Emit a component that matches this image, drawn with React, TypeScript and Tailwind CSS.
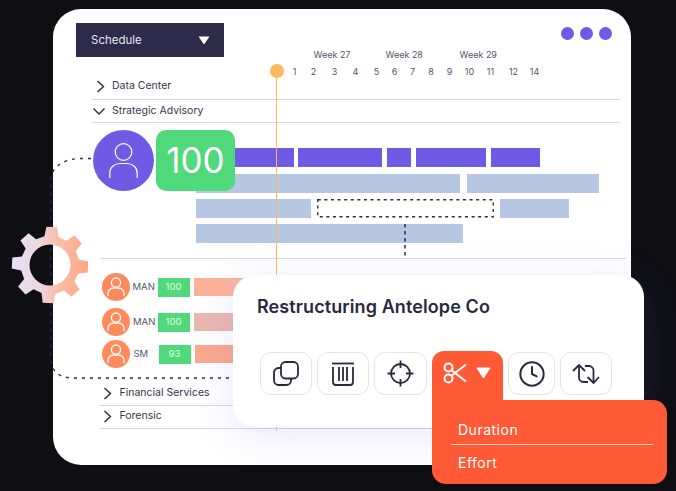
import type { ReactNode } from "react";
import { Clock } from "lucide-react";

const F = "font-['Inter','Liberation_Sans',sans-serif]";

const days: [string, string][] = [
  ["1", "w-[20px]"], ["2", "w-[18px]"], ["3", "w-[24px]"], ["4", "w-[18px]"], ["5", "w-[24px]"],
  ["6", "w-[12px]"], ["7", "w-[24px]"], ["8", "w-[13px]"], ["9", "w-[24px]"], ["10", "w-[16px]"],
  ["11", "w-[26px]"], ["12", "w-[20px]"], ["14", "w-[22px]"],
];

function gearPath() {
  const cx = 50, cy = 265, teeth = 8, rot = 0.05;
  const R = 38, r = 28.5;
  const pts: string[] = [];
  for (let i = 0; i < teeth; i++) {
    const a = (i * 2 * Math.PI) / teeth + rot;
    const p = (rad: number, off: number) => {
      const x = cx + rad * Math.sin(a) + off * Math.cos(a);
      const y = cy - rad * Math.cos(a) + off * Math.sin(a);
      return `${x.toFixed(2)} ${y.toFixed(2)}`;
    };
    pts.push(p(r, -7), p(R, -5.5), p(R, 5.5), p(r, 7));
  }
  const hole = 20.5;
  return `M${pts.join(" L")} Z M${cx - hole} ${cy} a${hole} ${hole} 0 1 0 ${hole * 2} 0 a${hole} ${hole} 0 1 0 ${-hole * 2} 0 Z`;
}

function Chevron({ down = false }: { down?: boolean }) {
  return down ? (
    <svg width="14" height="9" viewBox="0 0 14 9" fill="none" stroke="#2a2840" strokeWidth="1.4">
      <path d="M1.5 1.5 L7 7 L12.5 1.5" />
    </svg>
  ) : (
    <svg width="9" height="13" viewBox="0 0 9 13" fill="none" stroke="#2a2840" strokeWidth="1.4">
      <path d="M1.5 1 L7.5 6.5 L1.5 12" />
    </svg>
  );
}

function Person() {
  return (
    <svg width="29" height="35" viewBox="0 0 29 35" fill="none" stroke="#fff" strokeWidth="1.2">
      <circle cx="14.5" cy="9" r="8.3" />
      <path d="M0.8 35 V30 C0.8 24 6 20.5 11 20.5 H18 C23 20.5 28.2 24 28.2 30 V35" />
    </svg>
  );
}

function SmallPerson() {
  return (
    <svg width="18" height="20" viewBox="0 0 18 20" fill="none" stroke="#fff" strokeWidth="1.3">
      <circle cx="9" cy="5.6" r="4.6" />
      <path d="M1 19 V16 C1 13 4 11.2 6 11.2 H12 C14 11.2 17 13 17 16 V19" />
    </svg>
  );
}

function Section({ label, down, cls, labelCls, textCls = "" }: { label: string; down?: boolean; cls: string; labelCls: string; textCls?: string }) {
  return (
    <div className={`flex items-center h-[23px] border-b border-[#d9d5ee] ${cls}`}>
      <div className={labelCls}>
        <Chevron down={down} />
      </div>
      <span className={`text-[10.5px] leading-none text-[#37354d] ${textCls}`}>{label}</span>
    </div>
  );
}

function Resource({ role, score, bar, rowCls, roleCls }: { role: string; score: string; bar: string; rowCls: string; roleCls: string }) {
  return (
    <div className={`flex items-center h-[28px] ml-[49px] ${rowCls}`}>
      <div className="w-[28px] h-[28px] rounded-full bg-[#ff8a5e] flex items-center justify-center shrink-0">
        <SmallPerson />
      </div>
      <span className={`text-[9.5px] leading-none text-[#55536a] ${roleCls}`}>{role}</span>
      <div className="w-[32px] h-[19px] bg-[#4fd97a] flex items-center justify-center text-[9.5px] text-[#e8fbef] shrink-0">
        {score}
      </div>
      <div className={`h-[18.5px] ml-[4px] ${bar}`} />
    </div>
  );
}

function IconBtn({ w, children }: { w: string; children: ReactNode }) {
  return (
    <div className={`${w} h-[43px] mt-px rounded-[11px] border border-[#e4e1f6] bg-white flex items-center justify-center shrink-0`}>
      {children}
    </div>
  );
}

export default function App() {
  return (
    <div className={`${F} relative w-[676px] h-[491px] overflow-hidden bg-[#0e0e13]`}>
      {/* Main window */}
      <div className="relative ml-[52.5px] mt-[8.5px] w-[578.5px] h-[456.5px] rounded-[28px] bg-white flex flex-col">
        {/* Header */}
        <div className="flex h-[68.5px] shrink-0">
          <div className="ml-[23.5px] mt-[14.5px] w-[148px] h-[34px] bg-[#2d2a4a] flex items-center justify-between pl-[15px] pr-[14px]">
            <span className="text-[11.5px] text-[#e8e7f0] pt-[2px]">Schedule</span>
            <svg width="12" height="9" viewBox="0 0 12 9">
              <path d="M0.5 0.5 H11.5 L6 8.5 Z" fill="#fff" />
            </svg>
          </div>
          <div className="ml-[60.5px] pt-[40.5px] flex flex-col text-[#55536a]">
            <div className="flex text-[9px] leading-[11px] pl-[29px] gap-[36px]">
              <span className="w-[36px] whitespace-nowrap">Week 27</span>
              <span className="w-[38px] whitespace-nowrap">Week 28</span>
              <span className="w-[36px] whitespace-nowrap">Week 29</span>
            </div>
            <div className="flex text-[9px] leading-[11px] mt-[6px]">
              {days.map(([d, w]) => (
                <span key={d} className={`${w} text-center`}>{d}</span>
              ))}
            </div>
          </div>
        </div>

        {/* Sections */}
        <Section label="Data Center" cls="ml-[39.5px] mr-[11px] pb-[3px]" labelCls="w-[20px] pl-[4px]" />
        <Section label="Strategic Advisory" down cls="ml-[39.5px] mr-[11px]" labelCls="w-[20px]" />

        {/* Gantt */}
        <div className="relative shrink-0 pl-[143px] pt-[25px]">
          <div className="flex h-[18.5px] gap-[4.5px] pl-[39px]">
            <div className="w-[59px] bg-[#6f5ae6]" />
            <div className="w-[84px] bg-[#6f5ae6]" />
            <div className="w-[24.5px] bg-[#6f5ae6]" />
            <div className="w-[70.5px] bg-[#6f5ae6]" />
            <div className="w-[49px] bg-[#6f5ae6]" />
          </div>
          <div className="flex h-[18.5px] gap-[7px] mt-[7.5px]">
            <div className="w-[264px] bg-[#b5c7e3]" />
            <div className="w-[132px] bg-[#b5c7e3]" />
          </div>
          <div className="flex h-[18.5px] mt-[6.5px]">
            <div className="w-[115px] bg-[#b5c7e3]" />
            <svg className="ml-[6.5px] shrink-0" width="177" height="19" viewBox="0 0 177 19" fill="none">
              <rect x="0.75" y="0.75" width="175.5" height="17" stroke="#2d2a4a" strokeWidth="1.4" strokeDasharray="3 3.6" />
            </svg>
            <div className="w-[68.5px] ml-[6px] bg-[#b5c7e3]" />
          </div>
          <div className="h-[18.5px] w-[267px] mt-[6.5px] bg-[#b5c7e3]" />

          {/* Lead avatar and score, laid over the bars */}
          <div className="absolute left-[40.5px] top-[6.5px] flex gap-[2px] z-10">
            <div className="w-[61px] h-[61px] rounded-full bg-[#6f5ae6] flex items-center justify-center">
              <Person />
            </div>
            <div className="w-[79px] h-[61px] rounded-[10px] bg-[#4fd97a] flex items-center justify-center text-[35px] leading-none text-white">
              100
            </div>
          </div>
          {/* Dashed drop line */}
          <svg className="absolute left-[351.5px] top-[101px]" width="2" height="34" viewBox="0 0 2 34" fill="none">
            <path d="M1 0 V34" stroke="#2d2a4a" strokeWidth="1.5" strokeDasharray="3.5 3.5" />
          </svg>
        </div>

        <div className="ml-[48.5px] mr-[5px] mt-[15px] h-px bg-[#d9d5ee] shrink-0" />

        {/* Resources */}
        <div className="mt-[14.5px] shrink-0">
          <Resource role="MAN" score="100" bar="w-[70px] bg-gradient-to-r from-[#fdb096] to-[#ffb9a2]" rowCls="" roleCls="w-[28px] pl-[3px]" />
          <Resource role="MAN" score="100" bar="w-[42px] bg-[#eab8ae]" rowCls="mt-[7px]" roleCls="w-[28px] pl-[3.5px]" />
          <Resource role="SM" score="93" bar="w-[42px] bg-[#fca98c]" rowCls="mt-[4px]" roleCls="w-[29px] pl-[4px]" />
        </div>

        <div className="mt-[14.5px] shrink-0">
          <Section label="Financial Services" cls="ml-[46.5px] mr-[11px]" labelCls="w-[20.5px] pl-[4px]" />
          <Section label="Forensic" cls="ml-[46.5px] mr-[11px]" labelCls="w-[20.5px] pl-[4px]" />
        </div>

        {/* Window controls */}
        <div className="absolute right-[19px] top-[18px] flex gap-[6px]">
          <div className="w-[13px] h-[13px] rounded-full bg-[#6f5ae6]" />
          <div className="w-[13px] h-[13px] rounded-full bg-[#6f5ae6]" />
          <div className="w-[13px] h-[13px] rounded-full bg-[#6f5ae6]" />
        </div>

        {/* Today marker */}
        <div className="absolute left-[217px] top-[55.5px] w-[14px] h-[14px] rounded-full bg-[#fdb95e]" />
        <div className="absolute left-[223.25px] top-[62px] w-[1.5px] h-[360px] bg-[#fdb95e]" />
      </div>

      {/* Connector + gear */}
      <svg className="absolute inset-0 pointer-events-none" width="676" height="491" viewBox="0 0 676 491" fill="none">
        <defs>
          <linearGradient id="gear" gradientUnits="userSpaceOnUse" x1="12" y1="265" x2="88" y2="265">
            <stop offset="0" stopColor="#e6e2f6" />
            <stop offset="0.35" stopColor="#ecd6e0" />
            <stop offset="0.6" stopColor="#f8bfa9" />
            <stop offset="1" stopColor="#ffa685" />
          </linearGradient>
        </defs>
        <path d="M91 158.5 H78 Q58 160 51 175 V360 Q52 376 70 378 H233" stroke="#2d2a4a" strokeWidth="1.4" strokeDasharray="3 5" />
        <path d={gearPath()} fill="url(#gear)" fillRule="evenodd" />
      </svg>

      {/* Action popover */}
      <div className="absolute left-[233px] top-[275px] w-[411px] h-[152px] rounded-[22px] bg-white shadow-[0_8px_44px_rgba(118,98,232,0.16)]">
        <div className="pl-[24px] pt-[20px] text-[18px] leading-[24px] font-semibold text-[#2a2840] tracking-[0.1px]">
          Restructuring Antelope Co
        </div>
        <div className="flex items-start gap-[5px] pl-[27px] mt-[32px]">
          <IconBtn w="w-[52px]">
            <svg width="26" height="25" viewBox="0 0 26 25" fill="none" stroke="#2a2840" strokeWidth="1.8" strokeLinejoin="round">
              <rect x="8" y="1" width="17" height="16.5" rx="4.5" />
              <path d="M8 7 H5.5 A4.5 4.5 0 0 0 1 11.5 V19.5 A4.5 4.5 0 0 0 5.5 24 H13.5 A4.5 4.5 0 0 0 18 19.5 V17.5" />
            </svg>
          </IconBtn>
          <IconBtn w="w-[52px]">
            <svg width="24" height="24" viewBox="0 0 24 24" fill="none" stroke="#2a2840" strokeWidth="1.8">
              <path d="M1 1.5 H23" />
              <path d="M2 5 V20 A3 3 0 0 0 5 23 H19 A3 3 0 0 0 22 20 V5" />
              <path d="M8 5 V19 M12 5 V19 M16 5 V19" />
            </svg>
          </IconBtn>
          <IconBtn w="w-[53px]">
            <svg width="27" height="27" viewBox="0 0 27 27" fill="none" stroke="#2a2840" strokeWidth="1.8">
              <circle cx="13.5" cy="13.5" r="9.5" />
              <path d="M13.5 0.5 V8 M13.5 19 V26.5 M0.5 13.5 H8 M19 13.5 H26.5" />
            </svg>
          </IconBtn>
          <div className="relative w-[71px] h-[50px] rounded-t-[12px] bg-[#ff5a35] flex items-center pl-[11px] gap-[9px] pb-[7px] shrink-0">
            <svg width="24" height="22" viewBox="0 0 24 22" fill="none" stroke="#fff" strokeWidth="2">
              <circle cx="5.5" cy="5.5" r="4" />
              <circle cx="5.5" cy="16.5" r="4" />
              <path d="M8.5 8.2 L23 19.5 M8.5 13.8 L23 2.5" />
            </svg>
            <svg width="15" height="12" viewBox="0 0 15 12">
              <path d="M1 1 H14 L7.5 11 Z" fill="#fff" stroke="#fff" strokeLinejoin="round" />
            </svg>
            <div className="absolute left-0 top-[49px] w-[235px] h-[84px] rounded-[14px] rounded-tl-none bg-[#ff5a35] flex flex-col pl-[19px] pr-[14px] text-white text-[14px] tracking-[0.5px]">
              <div className="h-[45px] flex items-end pl-[7px] pb-[4px] border-b border-[#ffd9cd] leading-[20px]">Duration</div>
              <div className="pl-[7px] pt-[8px] leading-[20px]">Effort</div>
            </div>
          </div>
          <IconBtn w="w-[47px]">
            <Clock size={28} color="#2a2840" strokeWidth={1.7} />
          </IconBtn>
          <IconBtn w="w-[52px]">
            <svg width="28" height="20" viewBox="0 0 28 20" fill="none" stroke="#2a2840" strokeWidth="1.8">
              <path d="M1 7 L7 1 L13 7" />
              <path d="M7 1 V13.5 A4.5 4.5 0 0 0 11.5 18 H16" />
              <path d="M13 2 H17 A4.5 4.5 0 0 1 21.5 6.5 V19" />
              <path d="M15.5 13 L21.5 19 L27 13" />
            </svg>
          </IconBtn>
        </div>
      </div>
    </div>
  );
}
